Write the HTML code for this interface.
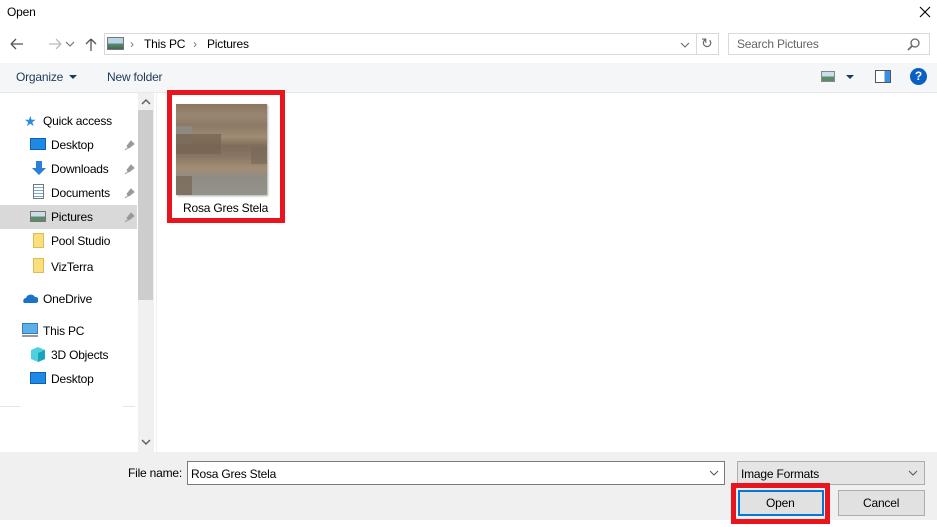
<!DOCTYPE html>
<html><head><style>
*{margin:0;padding:0;box-sizing:border-box}
body{width:937px;height:527px;background:#fff;font-family:"Liberation Sans",sans-serif;font-size:12px;color:#000;position:relative;overflow:hidden;letter-spacing:-0.2px}
.a{position:absolute}
.t{position:absolute;white-space:nowrap}
</style></head><body>
<div class="t" style="left:7px;top:5px;font-size:12px">Open</div>
<svg class="a" style="left:918px;top:5px" width="14" height="14"><path d="M2 2L12 12M12 2L2 12" stroke="#000" stroke-width="1.1"/></svg>
<svg class="a" style="left:8px;top:36px" width="90" height="16">
<path d="M3 8H15M3 8L8 3M3 8L8 13" stroke="#555" stroke-width="1.3" fill="none"/>
<path d="M53 8H41M53 8L48 3M53 8L48 13" stroke="#bbb" stroke-width="1.3" fill="none"/>
<path d="M58 6L62 10L66 6" stroke="#777" stroke-width="1.2" fill="none"/>
<path d="M83 15V3M83 3L78 8M83 3L88 8" stroke="#555" stroke-width="1.3" fill="none"/>
</svg>
<div class="a" style="left:104px;top:33px;width:593px;height:22px;border:1px solid #d9d9d9"></div>
<div class="a" style="left:696px;top:33px;width:23px;height:22px;border:1px solid #d9d9d9"></div>
<div class="a" style="left:107px;top:37px;width:17px;height:13px;border:1px solid #777;background:linear-gradient(#b8d4e8 45%,#5b8c6a 55%,#3e6a50)"></div>
<div class="t" style="left:130px;top:37px;color:#777">›</div>
<div class="t" style="left:144px;top:37px">This PC</div>
<div class="t" style="left:193px;top:37px;color:#777">›</div>
<div class="t" style="left:207px;top:37px">Pictures</div>
<svg class="a" style="left:680px;top:40px" width="12" height="10"><path d="M1 3L5 7L9 3" stroke="#666" fill="none"/></svg>
<div class="t" style="left:701px;top:35px;color:#666;font-size:14px">↻</div>
<div class="a" style="left:728px;top:33px;width:202px;height:22px;border:1px solid #d9d9d9"></div>
<div class="t" style="left:737px;top:37px;color:#666">Search Pictures</div>
<svg class="a" style="left:907px;top:37px" width="14" height="14"><circle cx="8" cy="6" r="4" stroke="#666" fill="none" stroke-width="1.3"/><path d="M5 9L1 13" stroke="#666" stroke-width="1.6"/></svg>
<div class="a" style="left:0;top:63px;width:937px;height:30px;background:#f5f6f7;border-bottom:1px solid #e8e8e8"></div>
<div class="t" style="left:16px;top:70px;color:#1e395b">Organize</div>
<svg class="a" style="left:68px;top:74px" width="10" height="6"><path d="M1 1H9L5 5Z" fill="#1e395b"/></svg>
<div class="t" style="left:107px;top:70px;color:#1e395b">New folder</div>
<div class="a" style="left:821px;top:71px;width:14px;height:11px;border:1px solid #888;background:linear-gradient(#cde 45%,#5b8c6a 55%)"></div>
<svg class="a" style="left:845px;top:74px" width="10" height="6"><path d="M1 1H9L5 5Z" fill="#1e395b"/></svg>
<div class="a" style="left:875px;top:70px;width:16px;height:13px;border:1px solid #555;background:linear-gradient(90deg,#fff 60%,#3a8ee6 60%)"></div>
<div class="a" style="left:910px;top:68px;width:17px;height:17px;border-radius:50%;background:#0a5fc4;color:#fff;font-weight:bold;text-align:center;line-height:17px;font-size:12px">?</div>
<div class="a" style="left:0;top:205px;width:137px;height:24px;background:#d9d9d9"></div>
<div class="t" style="left:24px;top:113px;color:#2a8be0;font-size:14px">★</div>
<div class="t" style="left:43px;top:114px">Quick access</div>
<div class="a" style="left:30px;top:138px;width:16px;height:12px;background:#1e8ae6;border:1px solid #0b5fb5"></div>
<div class="t" style="left:51px;top:138px">Desktop</div>
<svg class="a" style="left:31px;top:160px" width="16" height="16"><path d="M5 1H11V8H15L8 15L1 8H5Z" fill="#2a7fd9"/></svg>
<div class="t" style="left:51px;top:162px">Downloads</div>
<div class="a" style="left:33px;top:184px;width:11px;height:15px;border:1px solid #777;background:repeating-linear-gradient(#fff 0 2px,#7aa8d8 2px 3px)"></div>
<div class="t" style="left:51px;top:186px">Documents</div>
<div class="a" style="left:30px;top:211px;width:16px;height:11px;border:1px solid #777;background:linear-gradient(#cde 45%,#5b8c6a 55%)"></div>
<div class="t" style="left:51px;top:210px">Pictures</div>
<div class="a" style="left:33px;top:233px;width:11px;height:15px;background:#fadf7e;border:1px solid #e2b94c"></div>
<div class="t" style="left:51px;top:234px">Pool Studio</div>
<div class="a" style="left:33px;top:258px;width:11px;height:15px;background:#fadf7e;border:1px solid #e2b94c"></div>
<div class="t" style="left:51px;top:260px">VizTerra</div>
<svg class="a" style="left:122px;top:138px" width="14" height="90"><g fill="#999" stroke="#999"><path d="M5 8L9 3L12 6L7 10Z M7 9L3 12" stroke-width="1"/><path d="M5 32L9 27L12 30L7 34Z M7 33L3 36"/><path d="M5 56L9 51L12 54L7 58Z M7 57L3 60"/><path d="M5 80L9 75L12 78L7 82Z M7 81L3 84"/></g></svg>
<svg class="a" style="left:22px;top:292px" width="16" height="12"><path d="M2 11H14A3 3 0 0 0 13 5A5 5 0 0 0 4 6A3 3 0 0 0 2 11Z" fill="#1a73c9"/></svg>
<div class="t" style="left:43px;top:292px">OneDrive</div>
<div class="a" style="left:22px;top:323px;width:16px;height:11px;background:#5bb0ea;border:1px solid #3a7db8"></div>
<div class="a" style="left:22px;top:335px;width:16px;height:2px;background:#999"></div>
<div class="t" style="left:43px;top:324px">This PC</div>
<svg class="a" style="left:30px;top:346px" width="16" height="17"><path d="M8 1L15 4V13L8 16L1 13V4Z" fill="#4fd0e0"/><path d="M8 7L15 4V13L8 16Z" fill="#1aa3bc"/></svg>
<div class="t" style="left:51px;top:348px">3D Objects</div>
<div class="a" style="left:30px;top:372px;width:16px;height:12px;background:#1e8ae6;border:1px solid #0b5fb5"></div>
<div class="t" style="left:51px;top:372px">Desktop</div>
<div class="a" style="left:0;top:406px;width:20px;height:1px;background:#e5e5e5"></div>
<div class="a" style="left:123px;top:406px;width:12px;height:1px;background:#e5e5e5"></div>
<div class="a" style="left:138px;top:93px;width:16px;height:359px;background:#f0f0f0"></div>
<div class="a" style="left:138px;top:110px;width:15px;height:190px;background:#cdcdcd"></div>
<svg class="a" style="left:140px;top:97px" width="12" height="10"><path d="M2 7L6 3L10 7" stroke="#606060" stroke-width="1.5" fill="none"/></svg>
<svg class="a" style="left:140px;top:437px" width="12" height="10"><path d="M2 3L6 7L10 3" stroke="#606060" stroke-width="1.5" fill="none"/></svg>
<div class="a" style="left:156px;top:93px;width:1px;height:359px;background:#f0f0f0"></div>
<div class="a" style="left:167px;top:90px;width:118px;height:133px;border:5px solid #e8141e"></div>
<div class="a" style="left:176px;top:104px;width:91px;height:91px;box-shadow:1px 1px 2px #aaa;background:
linear-gradient(180deg,#8a7560 0%,#9a8670 12%,#8c7a66 24%,#a08b73 36%,#7e6c5a 46%,#8a7763 58%,#a28d74 70%,#8e8c86 82%,#95928a 100%)"></div>
<div class="a" style="left:176px;top:126px;width:16px;height:18px;background:#8d8b85;opacity:.8"></div>
<div class="a" style="left:176px;top:134px;width:45px;height:20px;background:#776553;opacity:.8"></div>
<div class="a" style="left:251px;top:147px;width:16px;height:17px;background:#7a6a58;opacity:.7"></div>
<div class="a" style="left:176px;top:176px;width:16px;height:19px;background:#7a6a58;opacity:.8"></div>
<div class="t" style="left:183px;top:201px">Rosa Gres Stela</div>
<div class="a" style="left:0;top:452px;width:937px;height:68px;background:#f0f0f0"></div>
<div class="t" style="left:128px;top:466px">File name:</div>
<div class="a" style="left:187px;top:461px;width:538px;height:24px;background:#fff;border:1px solid #7a7a7a"></div>
<div class="t" style="left:191px;top:467px">Rosa Gres Stela</div>
<svg class="a" style="left:709px;top:468px" width="12" height="10"><path d="M1 3L5 7L9 3" stroke="#555" fill="none"/></svg>
<div class="a" style="left:737px;top:461px;width:188px;height:24px;background:#e5e5e5;border:1px solid #adadad"></div>
<div class="t" style="left:741px;top:467px">Image Formats</div>
<svg class="a" style="left:908px;top:468px" width="12" height="10"><path d="M1 3L5 7L9 3" stroke="#555" fill="none"/></svg>
<div class="a" style="left:731px;top:483px;width:99px;height:41px;border:5px solid #e8141e"></div>
<div class="a" style="left:738px;top:490px;width:86px;height:26px;background:#e1e1e1;border:2px solid #0078d7"></div>
<div class="t" style="left:766px;top:496px">Open</div>
<div class="a" style="left:838px;top:490px;width:87px;height:26px;background:#e1e1e1;border:1px solid #adadad"></div>
<div class="t" style="left:863px;top:496px">Cancel</div>
</body></html>
